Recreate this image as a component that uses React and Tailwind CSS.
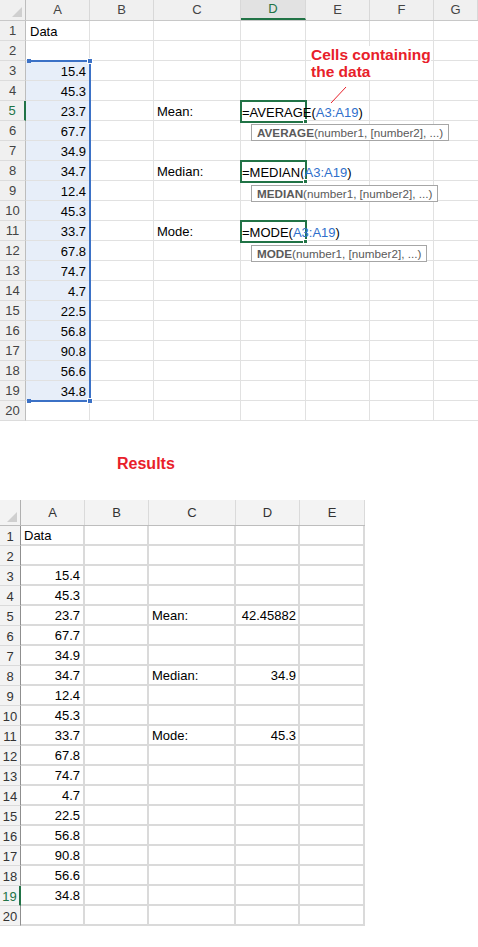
import React from "react";

const values = [15.4, 45.3, 23.7, 67.7, 34.9, 34.7, 12.4, 45.3, 33.7, 67.8, 74.7, 4.7, 22.5, 56.8, 90.8, 56.6, 34.8];
const rows = Array.from({ length: 20 }, (_, i) => i + 1);

// top sheet columns: row header, A..G
const topCols = ["w-[26px]", "w-[64px]", "w-[64px]", "w-[87px]", "w-[65px]", "w-[64px]", "w-[64px]", "w-[44px]"];
const topLetters = ["", "A", "B", "C", "D", "E", "F", "G"];

// bottom sheet columns: row header, A..E
const botCols = ["w-[21px]", "w-[64px]", "w-[64px]", "w-[87px]", "w-[64px]", "w-[65px]"];
const botLetters = ["", "A", "B", "C", "D", "E"];

const topLabels = { 5: "Mean:", 8: "Median:", 11: "Mode:" };
const botResults = { 5: ["Mean:", "42.45882"], 8: ["Median:", "34.9"], 11: ["Mode:", "45.3"] };

const Corner = () => (
  <svg width="10" height="10" className="absolute right-[3px] bottom-[3px]">
    <polygon points="10,0 10,10 0,10" fill="#cfcfcf" />
  </svg>
);

const valueFor = (r) => (r >= 3 && r <= 19 ? values[r - 3] : null);

const TopSheet = () => {
  return (
    <div className="relative w-[478px] h-[421px] overflow-hidden text-[13px] text-black">
      {/* header */}
      <div className="flex h-[21px] bg-[#f0f0f0] border-b border-[#c8c8c8]">
        {topLetters.map((l, i) => (
          <div
            key={i}
            className={`${topCols[i]} relative shrink-0 flex items-center justify-center border-r ${
              i === 0 ? "border-[#bdbdbd]" : "border-[#d8d8d8]"
            } ${l === "D" ? "text-[#217346] bg-[#e2e2e2] border-b-2 border-b-[#217346]" : "text-[#444]"}`}
          >
            {i === 0 ? <Corner /> : l}
          </div>
        ))}
      </div>
      {rows.map((r) => {
        const v = valueFor(r);
        return (
          <div key={r} className="flex h-[20px]">
            <div
              className={`${topCols[0]} shrink-0 flex items-center justify-center pt-[1px] bg-[#f0f0f0] border-r border-b ${
                r === 5 ? "text-[#217346] border-r-2 border-r-[#217346]" : "text-[#444] border-r-[#bdbdbd]"
              } border-b-[#dcdcdc]`}
            >
              {r}
            </div>
            <div
              className={`${topCols[1]} shrink-0 flex items-center pt-[2px] border-r border-b border-[#e1e1e1] ${
                v !== null ? "bg-[#e7eef9]" : ""
              } ${r === 1 ? "justify-start pl-[4px]" : "justify-end pr-[3px]"}`}
            >
              {r === 1 ? "Data" : v}
            </div>
            <div className={`${topCols[2]} shrink-0 border-r border-b border-[#e1e1e1]`} />
            <div className={`${topCols[3]} shrink-0 flex items-center pt-[2px] pl-[3px] border-r border-b border-[#e1e1e1]`}>
              {topLabels[r]}
            </div>
            <div className={`${topCols[4]} shrink-0 border-r border-b border-[#e1e1e1]`} />
            <div className={`${topCols[5]} shrink-0 border-r border-b border-[#e1e1e1]`} />
            <div className={`${topCols[6]} shrink-0 border-r border-b border-[#e1e1e1]`} />
            <div className={`${topCols[7]} shrink-0 border-b border-[#e1e1e1]`} />
          </div>
        );
      })}

      {/* selection A3:A19 */}
      <div className="absolute left-[27px] top-[60px] w-[64px] h-[342px] border-t-2 border-r-2 border-b-2 border-[#3b71c6]" />
      <div className="absolute left-[27px] top-[59px] w-[4px] h-[4px] bg-[#3b71c6]" />
      <div className="absolute left-[27px] top-[399px] w-[4px] h-[4px] bg-[#3b71c6]" />
      <div className="absolute left-[87px] top-[58px] w-[6px] h-[6px] bg-[#3b71c6] border border-white" />
      <div className="absolute left-[87px] top-[398px] w-[6px] h-[6px] bg-[#3b71c6] border border-white" />

      {/* formulas */}
      {[
        { top: "top-[100px]", tip: "top-[124px]", name: "AVERAGE" },
        { top: "top-[160px]", tip: "top-[185px]", name: "MEDIAN" },
        { top: "top-[220px]", tip: "top-[245px]", name: "MODE" },
      ].map((f) => (
        <React.Fragment key={f.name}>
          <div className={`absolute left-[240px] ${f.top} w-[67px] h-[23px] border-2 border-[#217346] bg-white`}>
            <div className="absolute left-0 top-[1px] h-[19px] flex items-center whitespace-nowrap">
              ={f.name}(<span className="text-[#2f6fcb]">A3:A19</span>)
            </div>
            <div className="absolute right-[-3px] bottom-[-3px] w-[5px] h-[5px] bg-[#217346] border border-white" />
          </div>
          <div
            className={`absolute left-[251px] ${f.tip} h-[17px] px-[5px] flex items-center border border-[#a6a6a6] bg-white text-[11.7px] text-[#5a5a5a] whitespace-nowrap`}
          >
            <span className="font-bold">{f.name}</span>(number1, [number2], ...)
          </div>
        </React.Fragment>
      ))}

      {/* annotation */}
      <div className="absolute left-[311px] top-[46px] text-[15.5px] leading-[17px] font-bold text-[#e8202a] bg-white">
        Cells containing
        <br />
        the data
      </div>
      <svg className="absolute left-0 top-0" width="478" height="421" pointerEvents="none">
        <line x1="346" y1="87" x2="331" y2="103" stroke="#e8202a" strokeWidth="1" />
      </svg>
    </div>
  );
};

const BottomSheet = () => {
  return (
    <div className="w-[365px] text-[13px] text-black">
      <div className="flex h-[26px] bg-[#f3f3f3] border-b border-[#bdbdbd]">
        {botLetters.map((l, i) => (
          <div
            key={i}
            className={`${botCols[i]} relative shrink-0 flex items-center justify-center border-r ${
              i === 0 ? "border-[#b0b0b0]" : "border-[#dadada]"
            } text-[#333]`}
          >
            {i === 0 ? <Corner /> : l}
          </div>
        ))}
      </div>
      {rows.map((r) => {
        const v = valueFor(r);
        const res = botResults[r];
        return (
          <div key={r} className="flex h-[20px]">
            <div
              className={`${botCols[0]} shrink-0 flex items-center justify-center pt-[2px] bg-[#f3f3f3] border-b border-[#dadada] border-r ${
                r === 19 ? "text-[#217346] border-r-2 border-r-[#217346]" : "text-[#333] border-r-[#8f8f8f]"
              }`}
            >
              {r}
            </div>
            <div
              className={`${botCols[1]} shrink-0 flex items-center pt-[2px] border-r-2 border-b-2 border-[#dadada] ${
                r === 1 ? "justify-start pl-[3px]" : "justify-end pr-[3px]"
              }`}
            >
              {r === 1 ? "Data" : v}
            </div>
            <div className={`${botCols[2]} shrink-0 border-r-2 border-b-2 border-[#dadada]`} />
            <div className={`${botCols[3]} shrink-0 flex items-center pt-[2px] pl-[3px] border-r-2 border-b-2 border-[#dadada]`}>
              {res ? res[0] : ""}
            </div>
            <div className={`${botCols[4]} shrink-0 flex items-center justify-end pt-[2px] pr-[2px] border-r-2 border-b-2 border-[#dadada]`}>
              {res ? res[1] : ""}
            </div>
            <div className={`${botCols[5]} shrink-0 border-r-2 border-b-2 border-[#dadada]`} />
          </div>
        );
      })}
    </div>
  );
};

export default function App() {
  return (
    <div className="w-[478px] h-[947px] bg-white overflow-hidden font-['Liberation_Sans',Arial,sans-serif]">
      <TopSheet />
      <div className="mt-[34px] h-[18px] leading-[18px] pl-[117px] text-[16px] font-bold text-[#e8202a]">Results</div>
      <div className="mt-[27px]">
        <BottomSheet />
      </div>
    </div>
  );
}
